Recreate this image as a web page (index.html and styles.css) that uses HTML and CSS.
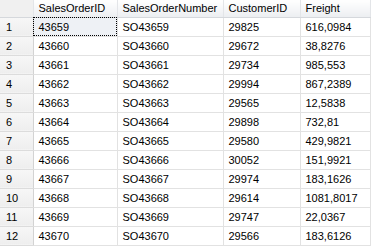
FILE: index.html
```html
<!DOCTYPE html>
<html lang="en">
<head>
    <meta charset="UTF-8">
    <title>Results</title>
    <link rel="stylesheet" href="styles.css">
</head>
<body>
    <table class="grid">
        <colgroup>
            <col class="c-num">
            <col class="c-id">
            <col class="c-order">
            <col class="c-cust">
            <col class="c-freight">
            <col class="c-rest">
        </colgroup>
        <thead>
            <tr>
                <th class="corner"></th>
                <th>SalesOrderID</th>
                <th>SalesOrderNumber</th>
                <th>CustomerID</th>
                <th>Freight</th>
                <th class="empty"></th>
            </tr>
        </thead>
        <tbody>
            <tr><td class="num">1</td><td class="focus">43659</td><td>SO43659</td><td>29825</td><td>616,0984</td><td class="empty"></td></tr>
            <tr><td class="num">2</td><td>43660</td><td>SO43660</td><td>29672</td><td>38,8276</td><td class="empty"></td></tr>
            <tr><td class="num">3</td><td>43661</td><td>SO43661</td><td>29734</td><td>985,553</td><td class="empty"></td></tr>
            <tr><td class="num">4</td><td>43662</td><td>SO43662</td><td>29994</td><td>867,2389</td><td class="empty"></td></tr>
            <tr><td class="num">5</td><td>43663</td><td>SO43663</td><td>29565</td><td>12,5838</td><td class="empty"></td></tr>
            <tr><td class="num">6</td><td>43664</td><td>SO43664</td><td>29898</td><td>732,81</td><td class="empty"></td></tr>
            <tr><td class="num">7</td><td>43665</td><td>SO43665</td><td>29580</td><td>429,9821</td><td class="empty"></td></tr>
            <tr><td class="num">8</td><td>43666</td><td>SO43666</td><td>30052</td><td>151,9921</td><td class="empty"></td></tr>
            <tr><td class="num">9</td><td>43667</td><td>SO43667</td><td>29974</td><td>183,1626</td><td class="empty"></td></tr>
            <tr><td class="num">10</td><td>43668</td><td>SO43668</td><td>29614</td><td>1081,8017</td><td class="empty"></td></tr>
            <tr><td class="num">11</td><td>43669</td><td>SO43669</td><td>29747</td><td>22,0367</td><td class="empty"></td></tr>
            <tr><td class="num">12</td><td>43670</td><td>SO43670</td><td>29566</td><td>183,6126</td><td class="empty"></td></tr>
        </tbody>
    </table>
</body>
</html>
```

FILE: styles.css
```css
body {
    margin: 0;
    padding: 0;
    background-color: #fff;
    font-family: "Liberation Sans", Arial, sans-serif;
    font-size: 11px;
    color: #000;
}

.grid {
    border-collapse: collapse;
    table-layout: fixed;
    width: 375px;
}

.c-num { width: 33px; }
.c-id { width: 84px; }
.c-order { width: 106px; }
.c-cust { width: 77px; }
.c-freight { width: 70px; }
.c-rest { width: 5px; }

.grid th {
    height: 17px;
    padding: 0 0 0 5px;
    text-align: left;
    font-weight: normal;
    white-space: nowrap;
    background: linear-gradient(#ffffff, #f4f5f7 60%, #eceef1);
    border-right: 1px solid #e3e5e8;
    border-bottom: 1px solid #d5d8dc;
    box-sizing: border-box;
}

.grid th.corner {
    background: #f0f0f0;
}

.grid td {
    height: 19px;
    padding: 0 0 0 5px;
    white-space: nowrap;
    border-right: 1px solid #e2e2e2;
    border-bottom: 1px solid #e2e2e2;
    box-sizing: border-box;
}

.grid td.num {
    padding-left: 6px;
    background: linear-gradient(#f7f7f7, #eeeeee);
    border-right: 1px solid #d3d3d3;
    border-bottom: 1px solid #dcdcdc;
}

.grid td.focus {
    background-color: #eef1f5;
    outline: 1px dotted #000;
    outline-offset: -1px;
}

.grid th.empty,
.grid td.empty {
    background: #fff;
    border: none;
}
```
